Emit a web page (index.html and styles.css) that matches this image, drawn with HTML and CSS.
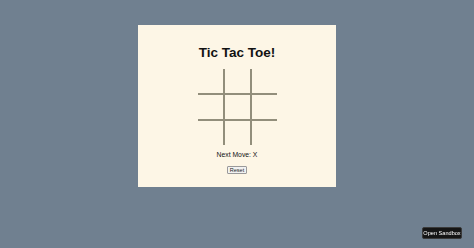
FILE: index.html
```html
<!DOCTYPE html>
<html lang="en">
<head>
    <meta charset="UTF-8">
    <meta name="viewport" content="width=device-width, initial-scale=1.0">
    <title>Tic Tac Toe</title>
    <link rel="stylesheet" href="styles.css">
</head>
<body>
    <div class="game">
        <h1>Tic Tac Toe!</h1>
        <div class="board">
            <div class="square"></div>
            <div class="square"></div>
            <div class="square"></div>
            <div class="square"></div>
            <div class="square"></div>
            <div class="square"></div>
            <div class="square"></div>
            <div class="square"></div>
            <div class="square"></div>
        </div>
        <p class="status">Next Move: X</p>
        <button class="reset">Reset</button>
    </div>
    <a class="sandbox-btn" href="#">Open Sandbox</a>
</body>
</html>
```

FILE: styles.css
```css
body {
    margin: 0;
    padding-top: 25px;
    background-color: #708090;
    font-family: "Liberation Sans", Arial, sans-serif;
}

.game {
    width: 198px;
    height: 162px;
    margin: 0 auto;
    padding-top: 20px;
    box-sizing: border-box;
    background-color: #fdf6e6;
    display: flex;
    flex-direction: column;
    align-items: center;
}

h1 {
    margin: 0;
    font-size: 13.5px;
    line-height: 16px;
    color: #111;
}

.board {
    margin-top: 8px;
    display: grid;
    grid-template-columns: repeat(3, 25px);
    grid-template-rows: repeat(3, 24px);
    gap: 2px;
    background-color: #928e7b;
}

.square {
    background-color: #fdf6e6;
}

.status {
    margin: 6px 0 0;
    font-size: 6.8px;
    line-height: 8px;
    color: #111;
}

.reset {
    margin-top: 7px;
    width: 20px;
    height: 8px;
    padding: 0;
    font-family: "Liberation Sans", Arial, sans-serif;
    font-size: 5.5px;
    line-height: 6px;
    color: #222;
    background-color: #f2f2f2;
    border: 1px solid #9a9a9a;
    border-radius: 1px;
}

.sandbox-btn {
    position: fixed;
    right: 12px;
    bottom: 9px;
    width: 40px;
    height: 12px;
    box-sizing: border-box;
    background-color: #151515;
    border: 1px solid #3a3a3a;
    border-radius: 2px;
    color: #fff;
    font-size: 5.6px;
    line-height: 10px;
    text-align: center;
    text-decoration: none;
    white-space: nowrap;
}
```
